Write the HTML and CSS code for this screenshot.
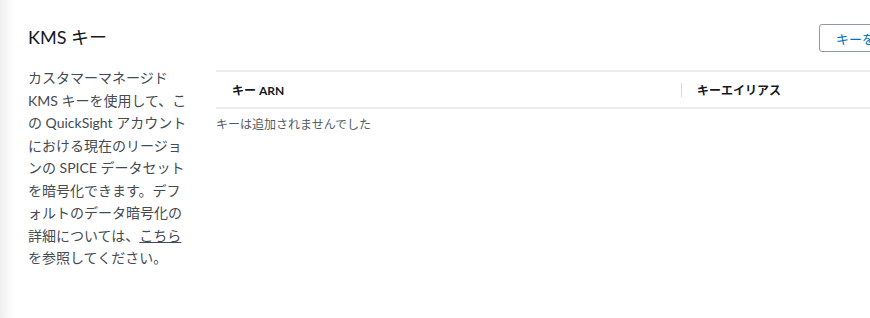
FILE: index.html
```html
<!DOCTYPE html>
<html lang="ja">
<head>
<meta charset="utf-8">
<link rel="stylesheet" href="styles.css">
</head>
<body>
<div class="page">
  <div class="edge"></div>
  <div class="content">
    <div class="header">
      <h2 class="title">KMS キー</h2>
      <button class="btn">キーを追加</button>
    </div>
    <div class="body">
      <p class="desc">カスタマーマネージド KMS キーを使用して、この QuickSight アカウントにおける現在のリージョンの SPICE データセットを暗号化できます。デフォルトのデータ暗号化の詳細については、<a class="link" href="#">こちら</a>を参照してください。</p>
      <div class="table">
        <div class="thead">
          <div class="th th-arn">キー ARN</div>
          <div class="th th-alias"><span class="sep"></span>キーエイリアス</div>
        </div>
        <div class="empty">キーは追加されませんでした</div>
      </div>
    </div>
  </div>
</div>
</body>
</html>
```

FILE: styles.css
```css
html, body {
  margin: 0;
  padding: 0;
  background: #ffffff;
}
body {
  font-family: "Lato", "Noto Sans CJK JP", sans-serif;
  color: #16191f;
  width: 870px;
  height: 318px;
  overflow: hidden;
}
.page {
  display: flex;
  height: 318px;
  overflow: hidden;
}
.edge {
  width: 14px;
  flex: none;
  background: linear-gradient(to right, #efefef, #ffffff);
}
.content {
  flex: 1;
  padding-left: 14px;
  min-width: 0;
  overflow: hidden;
}
.header {
  display: flex;
  justify-content: space-between;
  align-items: flex-start;
  height: 70px;
}
.title {
  margin: 25px 0 0 0;
  font-size: 18px;
  font-weight: 400;
  line-height: 24px;
  color: #16191f;
}
.btn {
  margin-top: 24px;
  margin-right: -60px;
  height: 28px;
  width: 111px;
  flex: none;
  padding: 0 0 0 16px;
  text-align: left;
  border: 1px solid #8d99a8;
  border-radius: 3px;
  background: #ffffff;
  color: #0073bb;
  font-family: "Lato", "Noto Sans CJK JP", sans-serif;
  font-size: 13px;
}
.body {
  display: flex;
  gap: 24px;
}
.desc {
  margin: -3px 0 0 0;
  width: 164px;
  flex: none;
  font-size: 14px;
  line-height: 22.5px;
  color: #444b53;
  line-break: loose;
}
.link {
  color: #444b53;
  text-decoration: underline;
}
.table {
  flex: 1;
  border-top: 2px solid #eaeded;
}
.thead {
  display: flex;
  height: 35px;
  align-items: center;
  border-bottom: 2px solid #eaeded;
}
.th {
  font-size: 12px;
  font-weight: 700;
  color: #16191f;
}
.th-arn {
  width: 465px;
  padding-left: 16px;
  box-sizing: border-box;
  flex: none;
}
.th-alias {
  display: flex;
  align-items: center;
}
.sep {
  width: 1px;
  height: 14px;
  background: #d5dbdb;
  margin-right: 15px;
}
.empty {
  font-size: 12px;
  color: #545b64;
  margin-top: 6px;
}
```
